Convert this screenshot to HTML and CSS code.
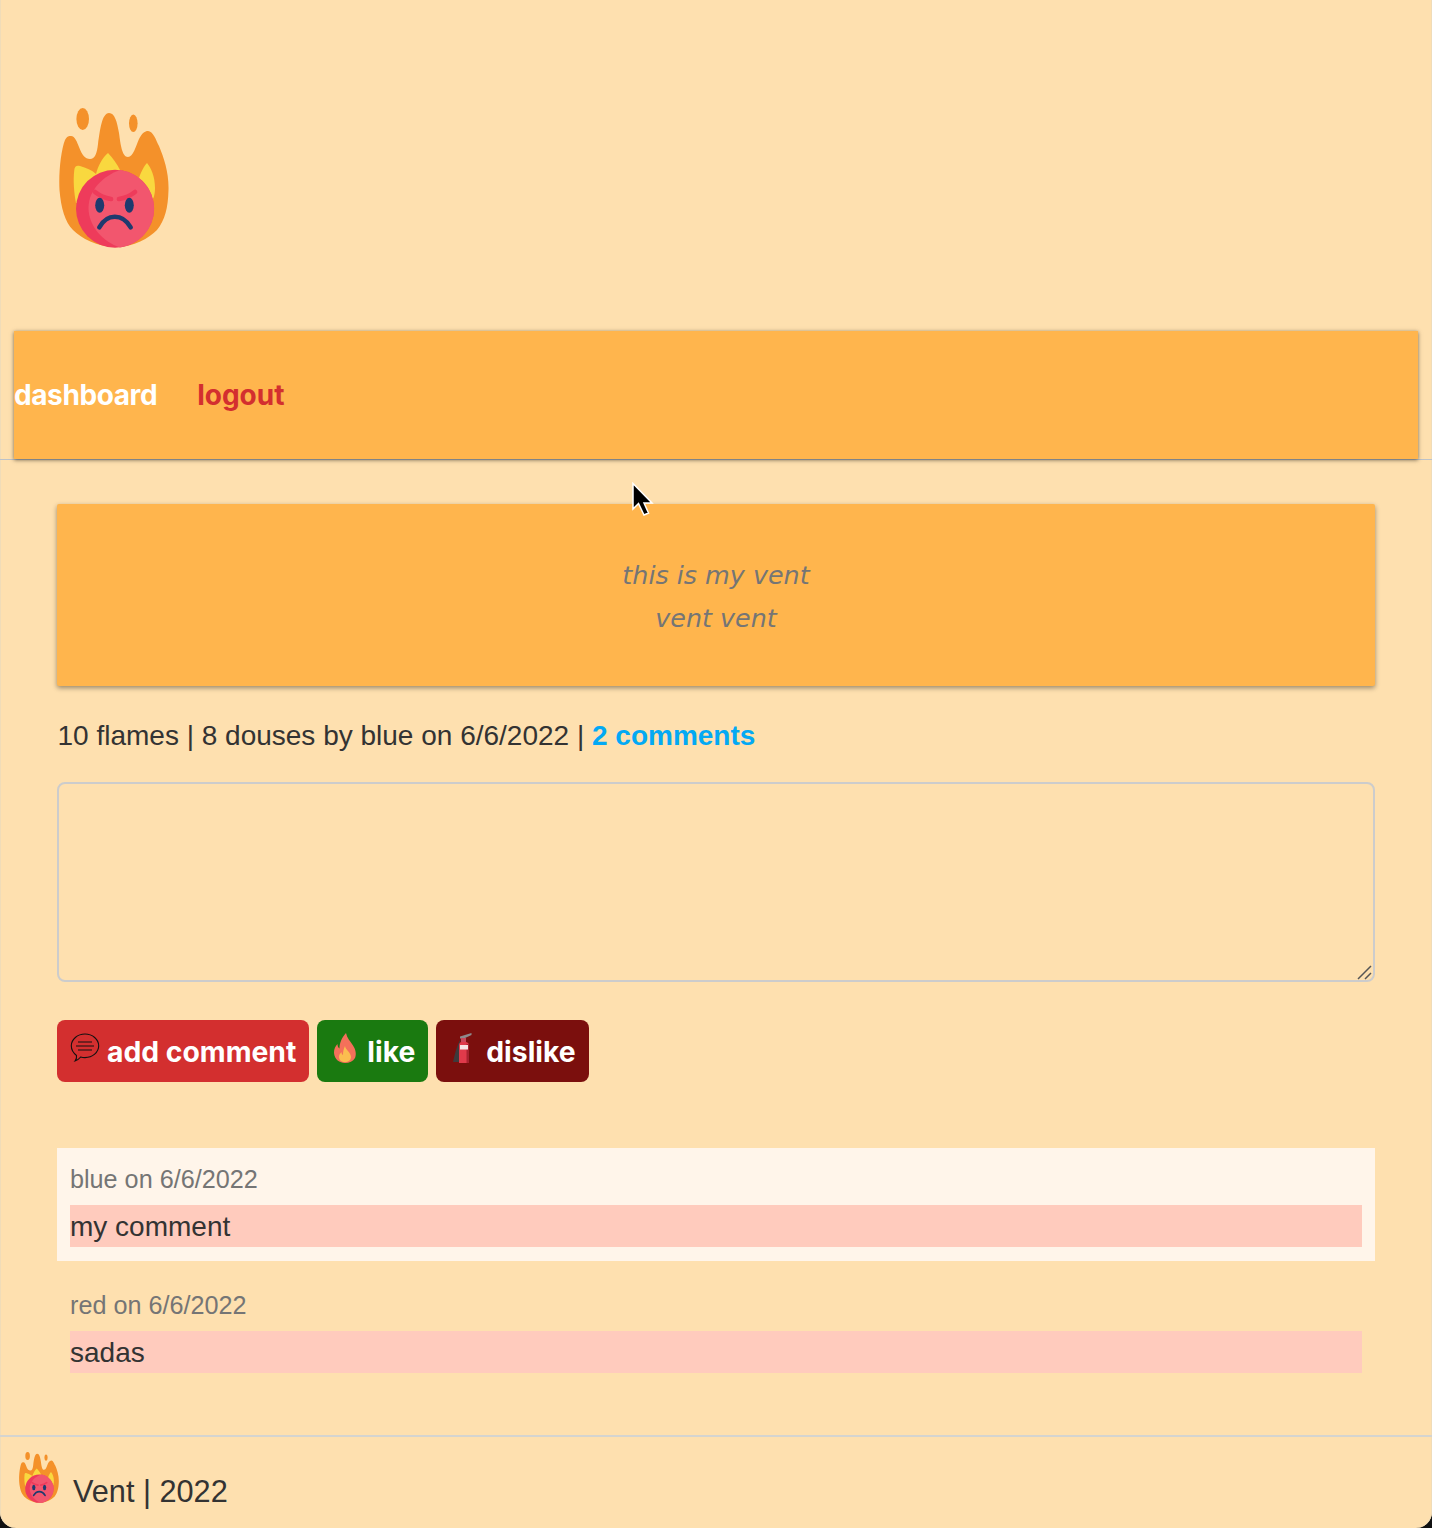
FILE: index.html
```html
<!DOCTYPE html>
<html lang="en">
<head>
    <meta charset="UTF-8">
    <title>Vent</title>
    <link rel="stylesheet" href="styles.css">
</head>
<body>
    <svg class="defs" width="0" height="0">
        <symbol id="vent-logo" viewBox="0 0 110 140">
            <ellipse cx="23.700" cy="11" rx="6.300" ry="11" fill="#f4912a"/>
            <ellipse cx="74.300" cy="15.300" rx="4.300" ry="8.700" fill="#f4912a"/>
            <path fill="#f4912a" d="M57 139C38 139 22 130 14 122 6 114 2 100 .5 82-.5 65 2 42 6 32 8 28 10 28 12 28 16 28 18 34 20 39 23 47 26 51 31 51 36 51 38 45 39 36 41 22 43 5 50 5 56 5 58 14 60 25 61.500 36 63 49 69 49 74 49 77 38 80 31 83 25 86 23 89 23 94 23 97 32 100 38 105 50 110 65 109.500 82 109 100 106 112 98 122 90 130 75 139 57 139Z"/>
            <path fill="#f9d83f" d="M17 95C15 85 14 72 15.300 62 15.500 58 18 57 21 58 27 60 33 62 37 66 39 58 43 50 49 45 54 50 58 56 61 62L80 70C82 64 85 58 88 55 92 60 96 68 96 80 96 85 95 90 93 92Z"/>
            <circle cx="56" cy="100.700" r="39" fill="#ee3b5b"/>
            <path fill="#f2566e" d="M61 62A39 39 0 0 1 61 139.400C44 134 29.500 118 29.500 100 29.500 82 44 68 61 62Z"/>
            <path fill="none" stroke="#ee3b5b" stroke-width="4.700" stroke-linecap="round" d="M36 84c5 4 10 6 16 7M76 84c-5 4-10 6-16 7"/>
            <ellipse cx="40.700" cy="97.300" rx="4.500" ry="7.500" fill="#1f3a6e"/>
            <ellipse cx="70.300" cy="97.300" rx="4.500" ry="7.500" fill="#1f3a6e"/>
            <path fill="none" stroke="#1f3a6e" stroke-width="4.500" stroke-linecap="round" d="M40.300 119.300c8-14 23-14 31.400 0"/>
        </symbol>
    </svg>

    <header class="site-header">
        <a class="logo-link" href="#">
            <svg class="logo" width="110" height="140"><use href="#vent-logo"/></svg>
        </a>
    </header>

    <div class="nav-wrap">
        <nav class="main-nav">
            <a class="nav-link" href="#">dashboard</a>
            <a class="nav-link nav-logout" href="#">logout</a>
        </nav>
    </div>

    <main class="content">
        <section class="vent-card">
            <p>this is my vent</p>
            <p>vent vent</p>
        </section>

        <p class="vent-meta">10 flames | 8 douses by blue on 6/6/2022 | <a href="#">2 comments</a></p>

        <div class="comment-wrap">
            <textarea class="comment-box"></textarea>
            <svg class="grip" width="16" height="16" viewBox="0 0 16 16" fill="none" stroke="#555" stroke-width="1.500">
                <path d="M1 15L14 2M8 15l6-6"/>
            </svg>
        </div>

        <div class="actions">
            <button class="btn btn-comment">
                <svg class="btn-icon" width="30" height="30" viewBox="0 0 30 30" fill="none" stroke="#111" stroke-width="1.100">
                    <path d="M15 1C22.500 1 28.700 6.300 28.700 12.800S22.500 24.600 15 24.600C13.500 24.600 12 24.400 10.700 24 9 26 7.500 27.500 5 28 6.300 26.500 6.800 24.500 6.500 22.500 3.300 20 1.300 16.500 1.300 12.800 1.300 6.300 7.500 1 15 1Z"/>
                    <path d="M8 9h14M6 13h18M8 17h14"/>
                </svg>
                add comment
            </button>
            <button class="btn btn-like">
                <svg class="btn-icon" width="30" height="30" viewBox="0 0 30 30">
                    <path fill="#f4705a" d="M16 0C17 5 20 8 23 12.500 26 17 26.500 21.500 25 25 23 28.500 19.500 30 15 30 9.500 30 4.500 26.500 4 20 3.800 16 5.500 13 7.500 11 7.500 13 8.200 14.600 9.500 15.500 9.500 9.500 12 4.500 16 0Z"/>
                    <path fill="#fbbd4f" d="M15 13C15.500 17 21 19.500 21 24 21 27 18.500 29 15 29 11.500 29 9 27 9 24 9 22 10 20.500 11.500 19 11.500 20.500 12 21.500 13 22 13 19 13.500 16 15 13Z"/>
                </svg>
                like
            </button>
            <button class="btn btn-dislike">
                <svg class="btn-icon" width="30" height="30" viewBox="0 0 30 30">
                    <path fill="#3f3a3c" d="M12 5C8 12 6 20 4 29h7V8z"/>
                    <path fill="#8d8a8c" d="M11 3.500L22.500 0v2L15 5.500h-4z"/>
                    <rect x="12" y="5" width="5" height="4" fill="#c9475a"/>
                    <path fill="#e03a4a" d="M12.500 9h4C18.500 9 20 10.500 20 12.500V30H10V12C10 10.500 11 9 12.500 9Z"/>
                    <rect x="17.500" y="11" width="2.500" height="19" fill="#a8222f"/>
                    <rect x="11" y="12" width="8" height="4.500" fill="#f7e3e3"/>
                </svg>
                dislike
            </button>
        </div>

        <section class="comments">
            <article class="comment comment-own">
                <p class="comment-by">blue on 6/6/2022</p>
                <p class="comment-text">my comment</p>
            </article>
            <article class="comment">
                <p class="comment-by">red on 6/6/2022</p>
                <p class="comment-text">sadas</p>
            </article>
        </section>
    </main>

    <footer class="site-footer">
        <svg class="footer-logo" width="40" height="51"><use href="#vent-logo"/></svg>
        <span>Vent | 2022</span>
    </footer>

    <svg class="cursor" width="24" height="36" viewBox="0 0 24 36">
        <path fill="#000" stroke="#fff" stroke-width="1.500" d="M3 1.500V27L8.500 21.500 14 33 18.500 31 14 21H22Z"/>
    </svg>
</body>
</html>
```

FILE: styles.css
```css
/* general */
html {
    background-color: #111;
}

body {
    font-family: "Liberation Sans", Arial, sans-serif;
    margin: 0;
    height: 1528px;
    box-sizing: border-box;
    position: relative;
    overflow: hidden;
    background-color: #fee0af;
    color: #333;
    border-radius: 0 0 16px 16px;
    box-shadow: inset 1px 0 0 #f0dcb8, inset -1px 0 0 #f0dcb8;
}

p {
    margin: 0;
}

a {
    text-decoration: none;
}

.defs {
    position: absolute;
}

/* header and nav */
.site-header {
    height: 331px;
    padding: 108px 0 0 59px;
    box-sizing: border-box;
}

.logo-link,
.logo {
    display: block;
}

.nav-wrap {
    height: 129px;
    box-sizing: border-box;
    padding: 0 14px;
    border-bottom: 1px solid #bcc2c9;
}

.main-nav {
    height: 128px;
    display: flex;
    align-items: center;
    gap: 40px;
    background-color: #ffb54d;
    box-shadow: 0 1px 4px rgba(0, 0, 0, 0.55);
    position: relative;
}

.nav-link {
    font-family: Inter, sans-serif;
    font-size: 28px;
    font-weight: 700;
    letter-spacing: -0.4px;
    color: #fff;
}

.nav-logout {
    color: #d32f2f;
    letter-spacing: 0;
}

/* main */
.content {
    padding: 44px 57px 0;
}

.vent-card {
    height: 182px;
    box-sizing: border-box;
    padding-top: 50px;
    background-color: #ffb54d;
    border-radius: 2px;
    box-shadow: 0 2px 5px rgba(0, 0, 0, 0.4);
    font-family: "DejaVu Sans", sans-serif;
    font-style: italic;
    font-size: 25.4px;
    line-height: 43px;
    text-align: center;
    color: #757575;
}

.vent-meta {
    margin-top: 30px;
    padding-left: 0.5px;
    font-size: 28px;
    line-height: 40px;
}

.vent-meta a {
    color: #03a9f4;
    font-weight: 700;
}

.comment-wrap {
    position: relative;
    margin-top: 26px;
}

.comment-box {
    display: block;
    width: 100%;
    height: 200px;
    box-sizing: border-box;
    background-color: transparent;
    border: 2px solid #ccc;
    border-radius: 8px;
    resize: none;
}

.grip {
    position: absolute;
    right: 2px;
    bottom: 2px;
}

.actions {
    display: flex;
    gap: 8px;
    margin-top: 38px;
}

.btn {
    height: 62px;
    display: flex;
    align-items: center;
    gap: 7px;
    padding: 2px 13px 0;
    border: none;
    border-radius: 8px;
    font-family: Inter, sans-serif;
    font-size: 28.300px;
    font-weight: 700;
    color: #fff;
}

.btn-comment {
    background-color: #d32f2f;
}

.btn-like {
    background-color: #1a7a10;
}

.btn-dislike {
    background-color: #7b0f0d;
}

.btn-icon {
    margin-top: -8px;
    overflow: visible;
}

/* comments */
.comments {
    margin-top: 66px;
}

.comment {
    padding: 13px;
    height: 113px;
    box-sizing: border-box;
}

.comment + .comment {
    margin-top: 13px;
}

.comment-own {
    background-color: #fff5ea;
}

.comment-by {
    font-size: 25.200px;
    line-height: 36px;
    color: #757575;
}

.comment-text {
    font-size: 28px;
    line-height: 40px;
    padding-top: 2px;
    margin-top: 8px;
    background-color: #ffcbbd;
}

/* footer */
.site-footer {
    position: absolute;
    left: 0;
    right: 0;
    top: 1435px;
    height: 93px;
    border-top: 2px solid #d4d4d0;
    box-sizing: border-box;
    display: flex;
    align-items: flex-start;
    padding: 15px 0 0 19px;
    gap: 14px;
    font-size: 30.700px;
}

.site-footer span {
    margin-top: 22px;
}

.cursor {
    position: absolute;
    left: 630px;
    top: 482px;
}
```
